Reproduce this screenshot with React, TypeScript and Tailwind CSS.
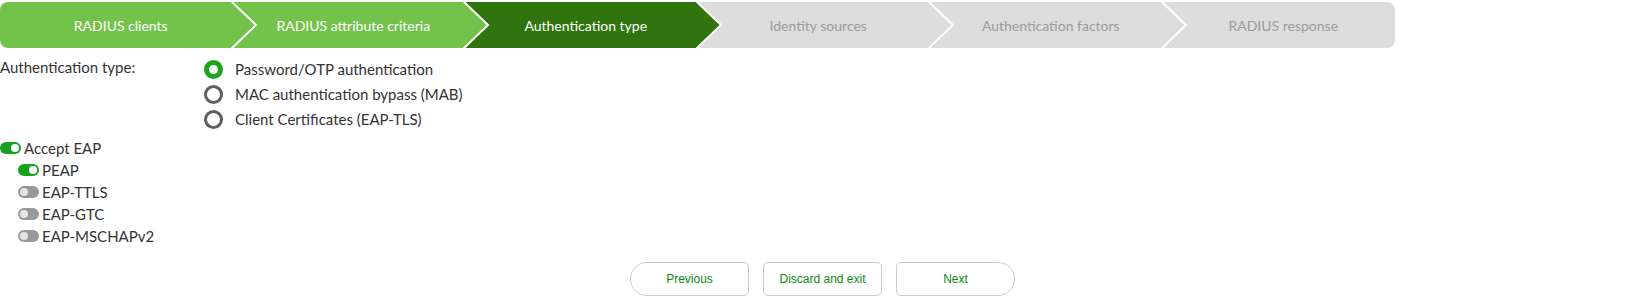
import React from "react";

type StepState = "done" | "active" | "todo";

const steps: { label: string; state: StepState }[] = [
  { label: "RADIUS clients", state: "done" },
  { label: "RADIUS attribute criteria", state: "done" },
  { label: "Authentication type", state: "active" },
  { label: "Identity sources", state: "todo" },
  { label: "Authentication factors", state: "todo" },
  { label: "RADIUS response", state: "todo" },
];

const stepColor: Record<StepState, string> = {
  done: "#73c34b",
  active: "#2f740f",
  todo: "#dddddd",
};

function Stepper() {
  return (
    <div className="mt-[2px] flex h-[46px] w-[1395px]">
      {steps.map((s, i) => {
        const bg =
          s.state === "done"
            ? "bg-[#73c34b] text-white"
            : s.state === "active"
            ? "bg-[#2f740f] text-white"
            : "bg-[#dddddd] text-[#9b9b9b]";
        return (
          <div
            key={s.label}
            className={`relative flex flex-1 items-center justify-center pl-[9px] text-[14px] ${bg} ${
              i === 0 ? "rounded-l-[8px]" : ""
            } ${i === steps.length - 1 ? "rounded-r-[8px]" : ""}`}
            style={{ zIndex: 20 - i }}
          >
            <span>{s.label}</span>
            {i < steps.length - 1 && (
              <svg
                className="absolute top-0 left-[calc(100%-3px)] h-[46px] w-[30px]"
                viewBox="0 0 30 46"
              >
                <polygon points="0,0 1,0 26,23 1,46 0,46" fill={stepColor[s.state]} />
                <polyline
                  points="1,-1 26,23 1,47"
                  fill="none"
                  stroke="white"
                  strokeWidth="2"
                />
              </svg>
            )}
          </div>
        );
      })}
    </div>
  );
}

function Radio({ checked, label }: { checked?: boolean; label: string }) {
  return (
    <div className="flex h-[25px] items-center">
      <span
        className={`box-border block h-[19px] w-[19px] rounded-full bg-white ${
          checked ? "border-[5px] border-[#1ea41e]" : "border-[3px] border-[#5f5f5f]"
        }`}
      />
      <span className="ml-[12px] text-[15px] text-[#333333]">{label}</span>
    </div>
  );
}

function Toggle({ on, label, indent }: { on?: boolean; label: string; indent?: boolean }) {
  return (
    <div className={`flex h-[22px] items-center ${indent ? "pl-[18px]" : ""}`}>
      <span
        className={`flex h-[12px] w-[21px] items-center rounded-full px-[2px] ${
          on ? "justify-end bg-[#16a21e]" : "justify-start bg-[#999999]"
        }`}
      >
        <span
          className={`block h-[8px] w-[8px] rounded-full ${on ? "bg-white" : "bg-[#e4e4e4]"}`}
        />
      </span>
      <span className="ml-[3px] text-[15px] text-[#333333]">{label}</span>
    </div>
  );
}

function Button({ label, shape }: { label: string; shape: "left" | "mid" | "right" }) {
  const r =
    shape === "left"
      ? "rounded-l-[17px] rounded-r-[5px]"
      : shape === "right"
      ? "rounded-l-[5px] rounded-r-[17px]"
      : "rounded-[5px]";
  return (
    <button
      className={`h-[34px] w-[119px] border border-[#cccccc] bg-white text-[12px] text-[#0c8a12] ${r}`}
      style={{ fontFamily: '"Liberation Sans", Arial, sans-serif' }}
    >
      {label}
    </button>
  );
}

export default function App() {
  return (
    <div
      className="h-[306px] w-[1650px] bg-white"
      style={{ fontFamily: 'Lato, "Noto Sans", sans-serif' }}
    >
      <Stepper />
      <div className="mt-[9px] flex">
        <div className="w-[204px] text-[15px] leading-[20px] text-[#333333]">
          Authentication type:
        </div>
        <div className="flex flex-col">
          <Radio checked label="Password/OTP authentication" />
          <Radio label="MAC authentication bypass (MAB)" />
          <Radio label="Client Certificates (EAP-TLS)" />
        </div>
      </div>
      <div className="mt-[5px] flex flex-col">
        <Toggle on label="Accept EAP" />
        <Toggle on indent label="PEAP" />
        <Toggle indent label="EAP-TTLS" />
        <Toggle indent label="EAP-GTC" />
        <Toggle indent label="EAP-MSCHAPv2" />
      </div>
      <div className="mt-[15px] flex justify-center gap-[14px] pr-[5px]">
        <Button label="Previous" shape="left" />
        <Button label="Discard and exit" shape="mid" />
        <Button label="Next" shape="right" />
      </div>
    </div>
  );
}
